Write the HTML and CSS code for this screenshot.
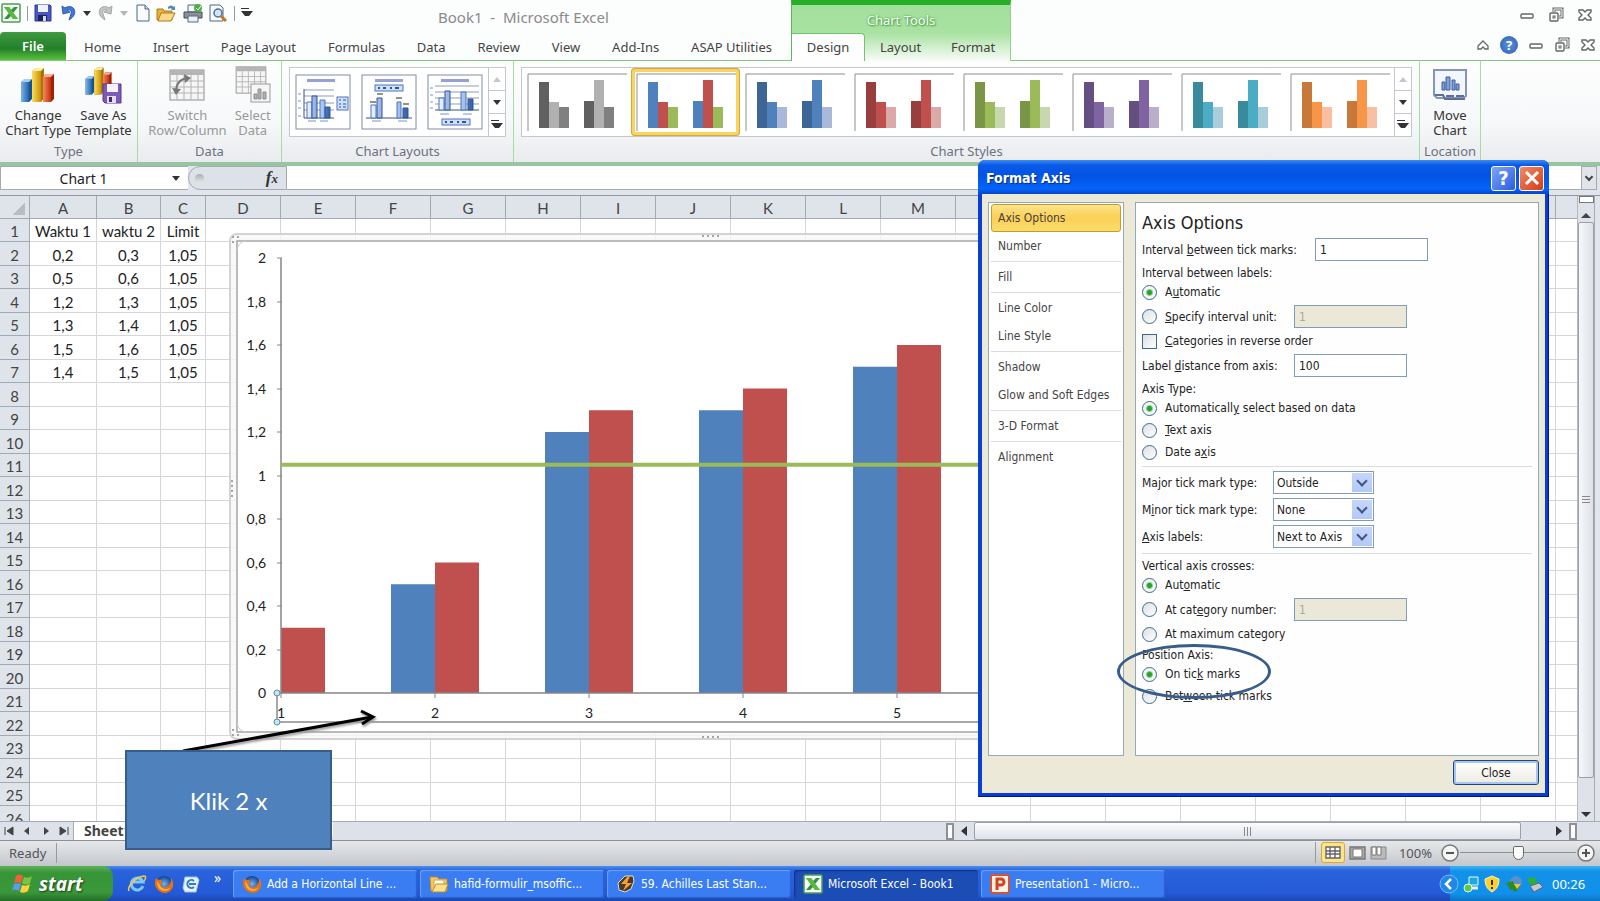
FILE: index.html
```html
<!DOCTYPE html>
<html lang="en">
<head>
    <meta charset="UTF-8">
    <meta name="viewport" content="width=device-width, initial-scale=1.0">
    <title>Book1 - Microsoft Excel</title>
    <link rel="stylesheet" href="styles.css">
</head>
<body>
    <!-- shared shapes -->
    <svg class="defs" width="0" height="0">
        <defs>
            <linearGradient id="gBlue"><stop offset="0" stop-color="#7db4e8"/><stop offset="1" stop-color="#1f63ad"/></linearGradient>
            <linearGradient id="gYellow"><stop offset="0" stop-color="#fbe05a"/><stop offset="1" stop-color="#c98d0a"/></linearGradient>
            <linearGradient id="gRed"><stop offset="0" stop-color="#f58a60"/><stop offset="1" stop-color="#c32f10"/></linearGradient>
            <linearGradient id="gBar"><stop offset="0" stop-color="#eaf2ff"/><stop offset="1" stop-color="#9fbdf0"/></linearGradient>
            <linearGradient id="gBarDark"><stop offset="0" stop-color="#a9c1ec"/><stop offset="1" stop-color="#365fa8"/></linearGradient>
            <radialGradient id="gFox"><stop offset="0" stop-color="#6fb4f5"/><stop offset="1" stop-color="#16418f"/></radialGradient>
        </defs>
        <symbol id="bars3d" viewBox="0 0 36 38">
            <path d="M1 16l4-3h7v20l-3 3H1z" fill="#17548f"/>
            <path d="M1 16h8v20H1z" fill="url(#gBlue)"/>
            <path d="M1 16l3-3h8l-3 3z" fill="#a6d0f2"/>
            <path d="M12 5l4-3h8v30l-3 4h-9z" fill="#a87408"/>
            <path d="M12 5h9v31h-9z" fill="url(#gYellow)"/>
            <path d="M12 5l4-3h8l-3 3z" fill="#fdf0a0"/>
            <path d="M23 11l3-3h8v25l-3 3h-8z" fill="#9e2108"/>
            <path d="M23 11h8v25h-8z" fill="url(#gRed)"/>
            <path d="M23 11l3-3h8l-3 3z" fill="#f9b08f"/>
        </symbol>
        <symbol id="swatch" viewBox="0 0 100 58">
            <path d="M1 58V1h99" fill="none" stroke="#8f8f8f"/>
            <path class="c1" d="M12 9h10v46H12zM57 28h10v27H57z"/>
            <path class="c2" d="M22 29h10v26H22zM67 7h10v48H67z"/>
            <path class="c3" d="M32 34h10v21H32zM77 34h10v21H77z"/>
        </symbol>
        <symbol id="firefox" viewBox="0 0 20 20">
            <circle cx="10" cy="10" r="8" fill="url(#gFox)"/>
            <path d="M2 4c-2 5-1 9 2 12 4 4 10 4 13 0 3-3 3-8 0-12 0 3 0 5-2 7-2 3-6 3-8 1-1-1 0-2 2-3-2-1-2-2-1-3C6 6 3 6 2 4z" fill="#e8701a"/>
            <path d="M3 7c0 5 2 9 7 10 3 0 5-1 6-3-4 2-9 1-10-3z" fill="#fbb034"/>
        </symbol>
        <symbol id="excel" viewBox="0 0 20 20">
            <rect x="1" y="1" width="18" height="18" rx="1" fill="#f4fbf2" stroke="#4f9a58" stroke-width="1.5"/>
            <path d="M3 4h5l2 3 3-3h4l-5 6 5 6h-5l-2-3-3 3H3l5-6z" fill="#2f9440"/>
            <path d="M8 4h-5l9 12h5z" fill="#5cb83f"/>
        </symbol>
        <symbol id="restore" viewBox="0 0 16 16">
            <path d="M6 5V2h8v8h-3" fill="none" stroke="#666" stroke-width="3"/>
            <path d="M6 5V2h8v8h-3" fill="none" stroke="#fff"/>
            <rect x="2" y="6" width="8" height="8" rx="1" fill="#fff" stroke="#666" stroke-width="1.4"/>
            <rect x="5" y="9" width="2" height="2" fill="#fff" stroke="#666"/>
        </symbol>
        <symbol id="minimize" viewBox="0 0 16 16">
            <rect x="2" y="7" width="12" height="4" rx="1" fill="#fff" stroke="#666" stroke-width="1.4"/>
        </symbol>
        <symbol id="cross" viewBox="0 0 16 16">
            <path d="M2 3h4l2 2 2-2h4v2l-3 3 3 3v2h-4l-2-2-2 2H2v-2l3-3-3-3z" fill="#fff" stroke="#666" stroke-width="1.4"/>
        </symbol>
        <symbol id="sheetIcon" viewBox="0 0 36 32">
            <rect x="1" y="1" width="34" height="30" fill="#f6f6f6" stroke="#8f8f8f"/>
            <path d="M1 1h34v5H1z" fill="#b5b5b5"/>
            <path d="M1 12h34M1 18h34M1 24h34M8 6v25M15 6v25M22 6v25M29 6v25" stroke="#b3b3b3"/>
        </symbol>
    </svg>

    <header class="titlebar">
        <div class="quick-access">
            <button aria-label="Excel"><svg width="20" height="20"><use href="#excel"/></svg></button>
            <span class="divider"></span>
            <button aria-label="Save"><svg width="18" height="18" viewBox="0 0 18 18"><path d="M1 1h15l1 1v15H1z" fill="#4a55c4" stroke="#2f3a96"/><path d="M4 1h10v7H4z" fill="#eef2fd"/><path d="M4 11h9v6H4z" fill="#1e2458"/><path d="M9 12h3v5H9z" fill="#d4dbf4"/></svg></button>
            <button class="undo" aria-label="Undo"><svg width="17" height="18" viewBox="0 0 17 18"><path d="M2 2l1 8 7-2-3-2c3-1 5 1 4 4l-2 6c5-3 7-7 5-11C12 2 8 2 5 4z" fill="#4179d6" stroke="#2b5cb4"/></svg></button>
            <span class="caret"></span>
            <button aria-label="Redo"><svg width="17" height="18" viewBox="0 0 17 18"><path d="M15 2l-1 8-7-2 3-2c-3-1-5 1-4 4l2 6C3 13 1 9 3 5c2-3 6-3 9-1z" fill="#c4c4c4" stroke="#a5a5a5"/></svg></button>
            <span class="caret caret-off"></span>
            <button class="new-file" aria-label="New"><svg width="14" height="18" viewBox="0 0 14 18"><path d="M1 1h8l4 4v12H1z" fill="#f9fcff" stroke="#4f668a"/><path d="M9 1v4h4" fill="#c9d8ee" stroke="#4f668a"/></svg></button>
            <button aria-label="Open"><svg width="21" height="18" viewBox="0 0 21 18"><path d="M1 5h6l1 2h8v9H1z" fill="#e8b13c" stroke="#b07b1c"/><path d="M5 9h14l-4 8H2z" fill="#fcd98a" stroke="#b07b1c"/><path d="M12 3c2-2 4-2 6 0l1-1v4h-4l1-1c-1-1-2-1-4 0z" fill="#4e86c6"/></svg></button>
            <button aria-label="Quick Print"><svg width="20" height="19" viewBox="0 0 20 19"><path d="M5 1h9v7H5z" fill="#f4f8ff" stroke="#5d6678"/><path d="M1 8h18v6H1z" fill="#8b919b" stroke="#454b55"/><path d="M5 12h10v6H5z" fill="#e9f1fc" stroke="#5d6678"/><circle cx="15" cy="4" r="4" fill="#4fae42"/><path d="M13 4l2 2 3-4" fill="none" stroke="#fff"/></svg></button>
            <button aria-label="Print Preview"><svg width="19" height="19" viewBox="0 0 19 19"><path d="M1 1h10l3 3v13H1z" fill="#f9fcff" stroke="#4f668a"/><circle cx="9" cy="9" r="4" fill="#cfe4f6" stroke="#51718f" stroke-width="1.5"/><path d="M12 12l5 5" stroke="#c07a2a" stroke-width="3"/></svg></button>
            <span class="divider"></span>
            <span class="caret caret-bar"></span>
        </div>
        <h1>Book1&nbsp; -&nbsp; Microsoft Excel</h1>
        <div class="window-buttons">
            <button aria-label="Minimize"><svg width="16" height="16"><use href="#minimize"/></svg></button>
            <button aria-label="Restore"><svg width="16" height="16"><use href="#restore"/></svg></button>
            <button aria-label="Close window"><svg width="16" height="16"><use href="#cross"/></svg></button>
        </div>
    </header>

    <nav class="tabs">
        <button class="tab tab-file">File</button>
        <div class="main-tabs">
            <button class="tab">Home</button>
            <button class="tab">Insert</button>
            <button class="tab">Page Layout</button>
            <button class="tab">Formulas</button>
            <button class="tab">Data</button>
            <button class="tab">Review</button>
            <button class="tab">View</button>
            <button class="tab">Add-Ins</button>
            <button class="tab">ASAP Utilities</button>
        </div>
        <div class="context-tabs">
            <span class="context-title">Chart Tools</span>
            <button class="tab tab-active">Design</button>
            <button class="tab">Layout</button>
            <button class="tab">Format</button>
        </div>
        <div class="window-buttons book-buttons">
            <button aria-label="Collapse ribbon"><svg width="14" height="16" viewBox="0 0 14 16"><path d="M2 9l5-5 5 5v3H9L7 10l-2 2H2z" fill="#fff" stroke="#666" stroke-width="1.3"/></svg></button>
            <button class="help" aria-label="Help">?</button>
            <button aria-label="Minimize book"><svg width="16" height="16"><use href="#minimize"/></svg></button>
            <button aria-label="Restore book"><svg width="16" height="16"><use href="#restore"/></svg></button>
            <button aria-label="Close book"><svg width="16" height="16"><use href="#cross"/></svg></button>
        </div>
    </nav>

    <section class="ribbon">
        <div class="group group-type">
            <div class="group-body">
                <button class="big"><svg width="36" height="38"><use href="#bars3d"/></svg>Change<br>Chart Type</button>
                <button class="big"><svg width="38" height="38" viewBox="0 0 38 38"><use href="#bars3d" width="30" height="30"/><path d="M19 18h18v19H21l-2-2z" fill="#7a5cb8" stroke="#543a92"/><path d="M23 18h11v8H23z" fill="#f5f2fc"/><path d="M23 30h9v7h-9z" fill="#e4def4"/><path d="M25 31h3v5h-3z" fill="#3f2c70"/></svg>Save As<br>Template</button>
            </div>
            <h2>Type</h2>
        </div>
        <div class="group group-data">
            <div class="group-body">
                <button class="big" disabled><svg width="36" height="38" viewBox="0 0 36 38"><use href="#sheetIcon" y="3" width="36" height="32"/><path d="M7 26c0-8 4-13 12-14" fill="none" stroke="#777" stroke-width="2"/><path d="M15 8l7 4-6 5zM3 22l4 7 5-6z" fill="#777"/></svg>Switch<br>Row/Column</button>
                <button class="big" disabled><svg width="36" height="38" viewBox="0 0 36 38"><use href="#sheetIcon" width="32" height="28"/><rect x="16" y="18" width="19" height="18" fill="#f6f6f6" stroke="#9a9a9a"/><path d="M19 33v-5h3v5zM23 33V23h3v10zM28 33v-7h3v7z" fill="#b0b0b0" stroke="#8f8f8f"/></svg>Select<br>Data</button>
            </div>
            <h2>Data</h2>
        </div>
        <div class="group group-layouts">
            <div class="group-body">
                <div class="gallery">
                    <button aria-label="Layout 1"><svg width="56" height="56" viewBox="0 0 56 56"><rect x="1" y="1" width="54" height="54" fill="#fff" stroke="#7f8ea8"/><path d="M12 5h28v3H12z" fill="#94a0d8"/><path d="M9 16h30M9 22h30M9 29h30M9 36h30" stroke="#8d9bb8"/><path d="M9 15v29h30" fill="none" stroke="#38527f"/><path d="M3 20h3M3 27h3M3 34h3M3 42h3M13 47h8M25 47h8" stroke="#7a94c8"/><path d="M12 28h5v16h-5zM25 26h5v18h-5z" fill="url(#gBar)" stroke="#4c74b8"/><path d="M17 22h5v22h-5zM30 33h5v11h-5z" fill="url(#gBarDark)" stroke="#2f5597"/><rect x="42" y="23" width="11" height="13" fill="#cfe0fb" stroke="#4c74b8"/><path d="M44 26h2M44 30h2M44 33h2M48 26h3M48 30h3M48 33h3" stroke="#2f5597"/></svg></button>
                    <button aria-label="Layout 2"><svg width="56" height="56" viewBox="0 0 56 56"><rect x="1" y="1" width="54" height="54" fill="#fff" stroke="#7f8ea8"/><path d="M14 5h28v3H14z" fill="#94a0d8"/><rect x="14" y="11" width="28" height="6" fill="#cfe0fb" stroke="#4c74b8"/><path d="M17 14h2M22 14h3M29 14h2M34 14h4" stroke="#2f5597" stroke-width="2"/><path d="M5 44h46" stroke="#38527f"/><path d="M10 31h5v13h-5zM36 28h4v16h-4z" fill="url(#gBar)" stroke="#4c74b8"/><path d="M16 24h5v20h-5zM42 34h5v10h-5z" fill="url(#gBarDark)" stroke="#2f5597"/><path d="M9 28h6M16 20h6M35 24h6M42 30h6" stroke="#222"/><path d="M11 47h9M37 47h9" stroke="#7a94c8"/></svg></button>
                    <button aria-label="Layout 3"><svg width="56" height="56" viewBox="0 0 56 56"><rect x="1" y="1" width="54" height="54" fill="#fff" stroke="#7f8ea8"/><path d="M14 5h28v3H14z" fill="#94a0d8"/><path d="M8 12h44M8 18h44M8 24h44M8 30h44" stroke="#8d9bb8"/><path d="M8 36h44" stroke="#38527f"/><path d="M3 14h3M3 21h3M3 28h3M3 34h3M13 40h9M36 40h9" stroke="#7a94c8"/><path d="M12 24h5v12h-5zM34 18h5v18h-5z" fill="url(#gBar)" stroke="#4c74b8"/><path d="M18 17h5v19h-5zM41 25h5v11h-5z" fill="url(#gBarDark)" stroke="#2f5597"/><rect x="15" y="45" width="28" height="6" fill="#cfe0fb" stroke="#4c74b8"/><path d="M18 48h2M23 48h3M30 48h2M35 48h4" stroke="#2f5597" stroke-width="2"/></svg></button>
                    <div class="gallery-scroll">
                        <button disabled aria-label="Previous layouts"><span class="up"></span></button>
                        <button aria-label="Next layouts"><span class="caret"></span></button>
                        <button aria-label="More layouts"><span class="caret caret-bar"></span></button>
                    </div>
                </div>
            </div>
            <h2>Chart Layouts</h2>
        </div>
        <div class="group group-styles">
            <div class="group-body">
                <div class="gallery gallery-styles">
                    <button class="style gray" aria-label="Style 1"><svg><use href="#swatch"/></svg></button>
                    <button class="style mixed selected" aria-label="Style 2"><svg><use href="#swatch"/></svg></button>
                    <button class="style blue" aria-label="Style 3"><svg><use href="#swatch"/></svg></button>
                    <button class="style red" aria-label="Style 4"><svg><use href="#swatch"/></svg></button>
                    <button class="style green" aria-label="Style 5"><svg><use href="#swatch"/></svg></button>
                    <button class="style purple" aria-label="Style 6"><svg><use href="#swatch"/></svg></button>
                    <button class="style teal" aria-label="Style 7"><svg><use href="#swatch"/></svg></button>
                    <button class="style orange" aria-label="Style 8"><svg><use href="#swatch"/></svg></button>
                    <div class="gallery-scroll">
                        <button disabled aria-label="Previous styles"><span class="up"></span></button>
                        <button aria-label="Next styles"><span class="caret"></span></button>
                        <button aria-label="More styles"><span class="caret caret-bar"></span></button>
                    </div>
                </div>
            </div>
            <h2>Chart Styles</h2>
        </div>
        <div class="group group-location">
            <div class="group-body">
                <button class="big"><svg width="36" height="38" viewBox="0 0 36 38"><path d="M2 4h32v26l-3 2H5l-3-3z" fill="#f3f7fd" stroke="#8496b8" stroke-width="2"/><path d="M3 29h8l2 4h20" fill="none" stroke="#5c6f94" stroke-width="2"/><path d="M14 30h8M24 30h8" stroke="#5c6f94" stroke-width="2"/><path d="M10 16h3v8h-3zM14 11h4v13h-4zM20 14h3v10h-3zM24 18h3v6h-3z" fill="#7d9fd8" stroke="#3f5f9c"/></svg>Move<br>Chart</button>
            </div>
            <h2>Location</h2>
        </div>
    </section>

    <section class="formula-bar">
        <div class="name-box"><input type="text" value="Chart 1" aria-label="Name Box"><span class="caret"></span></div>
        <div class="fx-box"><span class="knob"></span><button aria-label="Insert Function"><i>f</i><i class="sub">x</i></button></div>
        <input class="formula" type="text" aria-label="Formula">
        <button class="expand" aria-label="Expand formula bar"><span class="chevron"></span></button>
    </section>

    <main class="workbook">
        <div class="sheet">
            <table class="grid">
                <colgroup id="cols"><col class="col-head"><col class="col-a"><col class="col-b"><col class="col-c"></colgroup>
                <thead><tr id="letters"><th class="corner"></th></tr></thead>
                <tbody id="cells"></tbody>
            </table>

            <div class="chart">
                <svg id="chart" width="800" height="508" viewBox="229 232 800 508" font-size="14" fill="#222">
                    <rect x="230" y="234" width="820" height="505" rx="7" fill="#f7f7f7" fill-opacity=".8" stroke="#d3d3d3" stroke-width="2"/>
                    <rect x="237" y="241" width="820" height="491" fill="#fff" stroke="#a5a5a5" stroke-width="1.5"/>
                    <path d="M237 250q1-8 9-9M237 723q1 8 9 9" fill="none" stroke="#c9c9c9"/>
                    <path d="M232 237h2M237 237h2M232 242h2M232 730h2M232 735h2M237 735h2M702 236h2M707 236h2M712 236h2M717 236h2M702 737h2M707 737h2M712 737h2M717 737h2M231 481h2M231 486h2M231 491h2M231 496h2" stroke="#a5a5a5" stroke-width="2"/>
                </svg>
            </div>
        </div>
        <div class="vscroll">
            <span class="vsplit"></span>
            <button aria-label="Scroll up"><span class="up"></span></button>
            <div class="vthumb"><span class="grip"></span></div>
            <button aria-label="Scroll down"><span class="caret"></span></button>
        </div>
    </main>

    <div class="sheet-bar">
        <div class="sheet-nav">
            <button aria-label="First sheet"><svg width="10" height="10"><path d="M1 1v8M9 1v8L3 5z" fill="#444" stroke="#444"/></svg></button>
            <button aria-label="Previous sheet"><svg width="10" height="10"><path d="M7 1v8L2 5z" fill="#444"/></svg></button>
            <button aria-label="Next sheet"><svg width="10" height="10"><path d="M3 1v8l5-4z" fill="#444"/></svg></button>
            <button aria-label="Last sheet"><svg width="10" height="10"><path d="M9 1v8M1 1v8l6-4z" fill="#444" stroke="#444"/></svg></button>
        </div>
        <button class="sheet-tab">Sheet1</button>
        <div class="hscroll">
            <span class="hsplit"></span>
            <button aria-label="Scroll left"><svg width="10" height="12"><path d="M8 1v10L2 6z" fill="#333"/></svg></button>
            <div class="hthumb"><span class="grip grip-h"></span></div>
            <button aria-label="Scroll right"><svg width="10" height="12"><path d="M2 1v10l6-5z" fill="#333"/></svg></button>
            <span class="hsplit"></span>
        </div>
    </div>

    <footer class="status">
        <span class="ready">Ready</span>
        <div class="views">
            <button class="view-on" aria-label="Normal"><svg width="16" height="13"><path d="M1 1h14v11H1zM1 5h14M1 8h14M5 1v11M10 1v11" fill="#fff" stroke="#666" stroke-width="1.4"/></svg></button>
            <button aria-label="Page Layout view"><svg width="17" height="14"><path d="M1 1h15v12H1z" fill="#aaa" stroke="#777" stroke-width="1.4"/><path d="M4 3h9v8H4z" fill="#fff" stroke="#777"/></svg></button>
            <button aria-label="Page Break Preview"><svg width="17" height="14"><path d="M1 1h15v12H1z" fill="#bbb" stroke="#888"/><path d="M2 1h4v8H2zM7 1h4v8H7z" fill="#fff" stroke="#777"/></svg></button>
        </div>
        <label class="zoom-value" for="zoom">100%</label>
        <div class="zoom">
            <button aria-label="Zoom out"><svg width="20" height="20"><circle cx="10" cy="10" r="8" fill="#f5f5f5" stroke="#777" stroke-width="1.5"/><path d="M6 10h8" stroke="#555" stroke-width="2"/></svg></button>
            <input type="range" id="zoom" min="0" max="100" value="50">
            <button aria-label="Zoom in"><svg width="20" height="20"><circle cx="10" cy="10" r="8" fill="#f5f5f5" stroke="#777" stroke-width="1.5"/><path d="M6 10h8M10 6v8" stroke="#555" stroke-width="2"/></svg></button>
        </div>
    </footer>

    <footer class="taskbar">
        <button class="start">
            <svg width="22" height="20" viewBox="0 0 22 20"><path d="M4 2c3-2 5-1 7 0L9 9C7 8 5 8 2 9z" fill="#f2603a"/><path d="M12 3c3 1 5 1 8-1l-2 7c-2 2-5 2-8 0z" fill="#7cc33f"/><path d="M2 10c3-1 5-1 7 0l-2 7c-2-1-5-2-7 0z" fill="#5b9bf0"/><path d="M10 11c3 1 5 1 8-1l-2 7c-3 2-5 2-8 1z" fill="#fcd23c"/></svg>
            start
        </button>
        <div class="quick-launch">
            <button aria-label="Internet Explorer"><svg width="20" height="20" viewBox="0 0 20 20"><path d="M16 12a6 6 0 1 1 0-4H6" fill="none" stroke="#7cc8fa" stroke-width="3"/><path d="M2 17C0 13 8 3 17 2c3 0 1 4 0 5" fill="none" stroke="#f3c84a" stroke-width="1.5"/></svg></button>
            <button aria-label="Firefox"><svg width="20" height="20"><use href="#firefox"/></svg></button>
            <button aria-label="Show Desktop"><svg width="20" height="20" viewBox="0 0 20 20"><path d="M4 3h12l2 3-3 12H4L2 14z" fill="#e8f3ff" stroke="#9cc4ee"/><path d="M13 7a4 4 0 1 0 0 6M8 10h7" fill="none" stroke="#2f7fd0" stroke-width="2"/></svg></button>
            <span class="more">»</span>
        </div>
        <div class="tasks">
            <button class="task"><svg width="20" height="20"><use href="#firefox"/></svg><span>Add a Horizontal Line ...</span></button>
            <button class="task"><svg width="20" height="20" viewBox="0 0 20 20"><path d="M1 3h7l2 2h8v12H2z" fill="#f6c95c" stroke="#c08c28"/><path d="M5 6h10v8H5z" fill="#fffbe8" stroke="#c9a65a"/><path d="M7 10h12l-3 8H3z" fill="#fbe08e" stroke="#c08c28"/></svg><span>hafid-formulir_msoffic...</span></button>
            <button class="task"><svg width="20" height="20" viewBox="0 0 20 20"><path d="M2 9l7-7 8 0 1 5-3 8-6 3-6-2z" fill="#4a3a2a" stroke="#ddd"/><path d="M12 2L5 10h5l-3 7 9-8h-5l3-7z" fill="#f8a130"/></svg><span>59. Achilles Last Stan...</span></button>
            <button class="task task-active"><svg width="20" height="20"><use href="#excel"/></svg><span>Microsoft Excel - Book1</span></button>
            <button class="task"><svg width="20" height="20" viewBox="0 0 20 20"><rect x="1" y="1" width="18" height="18" rx="2" fill="#fff1ea" stroke="#d9532c" stroke-width="2"/><path d="M7 16V5h4a3 3 0 0 1 0 6H7" fill="none" stroke="#cf4520" stroke-width="3"/></svg><span>Presentation1 - Micro...</span></button>
        </div>
        <div class="tray">
            <button class="tray-arrow" aria-label="Hide icons"><svg width="20" height="20" viewBox="0 0 20 20"><circle cx="10" cy="10" r="9" fill="#2387ea" stroke="#6cc0fb"/><path d="M12 5l-5 5 5 5" fill="none" stroke="#fff" stroke-width="2.5"/></svg></button>
            <svg width="17" height="18" viewBox="0 0 17 18"><path d="M6 2h9v8H6z" fill="#1fa8d8" stroke="#dff"/><path d="M5 13h10" stroke="#eee" stroke-width="3"/><circle cx="5" cy="13" r="4" fill="#5dc94a" stroke="#e8ffe0"/></svg>
            <svg width="17" height="18" viewBox="0 0 17 18"><path d="M8 1l7 3c0 6-2 10-7 13C3 14 1 10 1 4z" fill="#fbd02e" stroke="#fff2b0"/><path d="M8 5v5M8 12v2" stroke="#3a2b00" stroke-width="2"/></svg>
            <svg width="18" height="18" viewBox="0 0 18 18"><circle cx="11" cy="7" r="6" fill="#5c8fd0"/><path d="M1 8l7-2 2 5 6-2-5 8-6-3z" fill="#2c8a26"/><path d="M9 9l3 5 4-5z" fill="#f0c52e"/></svg>
            <svg width="17" height="18" viewBox="0 0 17 18"><path d="M3 11l9-3 4 4-9 5z" fill="#c4c8ce" stroke="#666"/><path d="M1 2l4 1 4-1-1 3 3 2-6 3-4-4z" fill="#2fb02c"/></svg>
            <time>00:26</time>
        </div>
    </footer>

    <section class="dialog" role="dialog" aria-labelledby="dialogTitle">
        <div class="dialog-title">
            <h2 id="dialogTitle">Format Axis</h2>
            <button class="dialog-help" aria-label="Dialog help">?</button>
            <button class="dialog-x" aria-label="Close dialog"><svg width="18" height="18"><path d="M3 3l12 12M15 3L3 15" stroke="#fff" stroke-width="3"/></svg></button>
        </div>
        <div class="dialog-body">
            <div class="pages">
                <button class="page page-on">Axis Options</button>
                <button class="page">Number</button>
                <hr>
                <button class="page">Fill</button>
                <hr>
                <button class="page">Line Color</button>
                <button class="page">Line Style</button>
                <hr>
                <button class="page">Shadow</button>
                <button class="page">Glow and Soft Edges</button>
                <hr>
                <button class="page">3-D Format</button>
                <hr>
                <button class="page">Alignment</button>
            </div>
            <form class="options">
                <h3>Axis Options</h3>
                <div class="field"><label class="wide" for="tick">Interval <u>b</u>etween tick marks:</label><input type="text" id="tick" value="1"></div>
                <p class="caption">Interval between labels:</p>
                <label class="option"><input type="radio" name="interval" checked><span>A<u>u</u>tomatic</span></label>
                <div class="field"><label class="option mid"><input type="radio" name="interval"><span><u>S</u>pecify interval unit:</span></label><input type="text" value="1" aria-label="Interval unit" disabled></div>
                <label class="option"><input type="checkbox"><span><u>C</u>ategories in reverse order</span></label>
                <div class="field"><label class="mid" for="dist">Label <u>d</u>istance from axis:</label><input type="text" id="dist" value="100"></div>
                <p class="caption">Axis Type:</p>
                <label class="option"><input type="radio" name="type" checked><span>Automaticall<u>y</u> select based on data</span></label>
                <label class="option"><input type="radio" name="type"><span><u>T</u>ext axis</span></label>
                <label class="option"><input type="radio" name="type"><span>Date a<u>x</u>is</span></label>
                <hr>
                <div class="field"><label class="short" for="major">Ma<u>j</u>or tick mark type:</label><div class="select"><select id="major"><option>Outside</option></select></div></div>
                <div class="field"><label class="short" for="minor">M<u>i</u>nor tick mark type:</label><div class="select"><select id="minor"><option>None</option></select></div></div>
                <div class="field"><label class="short" for="labels"><u>A</u>xis labels:</label><div class="select"><select id="labels"><option>Next to Axis</option></select></div></div>
                <hr>
                <p class="caption">Vertical axis crosses:</p>
                <label class="option"><input type="radio" name="cross" checked><span>Aut<u>o</u>matic</span></label>
                <div class="field"><label class="option mid"><input type="radio" name="cross"><span>At cat<u>e</u>gory number:</span></label><input type="text" value="1" aria-label="Category number" disabled></div>
                <label class="option"><input type="radio" name="cross"><span>At maximum cate<u>g</u>ory</span></label>
                <p class="caption">Position Axis:</p>
                <label class="option"><input type="radio" name="position" checked><span>On tic<u>k</u> marks</span></label>
                <label class="option"><input type="radio" name="position"><span>Bet<u>w</u>een tick marks</span></label>
            </form>
        </div>
        <div class="dialog-foot"><button class="close">Close</button></div>
        <div class="ring"></div>
    </section>

    <svg class="arrow" width="200" height="46" viewBox="0 0 200 46">
        <path d="M1 42L190 8" stroke="#000" stroke-width="3"/>
        <path d="M179 2l12 6-11 7" fill="none" stroke="#000" stroke-width="3"/>
    </svg>
    <div class="callout">Klik 2 x</div>

    <script>
        // worksheet grid
        const data = [
            ["Waktu 1", "waktu 2", "Limit"],
            ["0,2", "0,3", "1,05"],
            ["0,5", "0,6", "1,05"],
            ["1,2", "1,3", "1,05"],
            ["1,3", "1,4", "1,05"],
            ["1,5", "1,6", "1,05"],
            ["1,4", "1,5", "1,05"]
        ];
        // the dialog covers the headings after M
        const letters = "ABCDEFGHIJKLM".split("").concat(Array(9).fill(""));
        document.getElementById("letters").innerHTML += letters.map(l => `<th scope="col">${l}</th>`).join("");
        document.getElementById("cols").innerHTML += "<col>".repeat(letters.length - 3);
        let rows = "";
        for (let r = 0; r < 26; r++) {
            rows += `<tr><th scope="row">${r + 1}</th>`;
            letters.forEach((l, c) => {
                rows += `<td>${data[r] && data[r][c] ? data[r][c] : ""}</td>`;
            });
            rows += "</tr>";
        }
        document.getElementById("cells").innerHTML = rows;

        // clustered columns with the limit line
        const x0 = 281, y0 = 693, stepX = 154, unit = 217.5, bar = 44;
        const y = v => y0 - v * unit;
        let out = "";
        for (let i = 0; i <= 10; i++) {
            const v = i / 5;
            out += `<path d="M277 ${Math.round(y(v))}h5" stroke="#868686"/>`;
            out += `<text x="266" y="${Math.round(y(v)) + 5}" text-anchor="end">${String(v).replace(".", ",")}</text>`;
        }
        data.slice(1, 6).forEach((row, i) => {
            const x = x0 + i * stepX;
            const [a, b] = row.map(t => parseFloat(t.replace(",", ".")));
            // the first blue column falls left of the axis and is cut off
            if (i > 0) out += `<rect x="${x - bar}" y="${y(a)}" width="${bar}" height="${a * unit}" fill="#4f81bd"/>`;
            out += `<rect x="${x}" y="${y(b)}" width="${bar}" height="${b * unit}" fill="#c0504d"/>`;
            out += `<path d="M${x} ${y0}v5" stroke="#868686"/>`;
            out += `<text x="${x}" y="718" text-anchor="middle">${i + 1}</text>`;
        });
        out += `<path d="M281 258V693H1029" fill="none" stroke="#868686" stroke-width="1.5"/>`;
        out += `<path d="M281 ${y(1.05)}H1029" stroke="#9bbb59" stroke-width="4"/>`;
        out += `<path d="M1029 722H277V693" fill="none" stroke="#8a8a8a" stroke-width="1.5"/>`;
        out += `<circle cx="277" cy="693" r="3" fill="#c9e4f2" stroke="#5c8ba8"/><circle cx="277" cy="722" r="3" fill="#c9e4f2" stroke="#5c8ba8"/>`;
        document.getElementById("chart").innerHTML += out;
    </script>
</body>
</html>
```
FILE: styles.css
```css
* {
    box-sizing: border-box;
}
body {
    margin: 0;
    height: 100vh;
    display: flex;
    flex-direction: column;
    overflow: hidden;
    position: relative;
    font-family: "Noto Sans", sans-serif;
    font-size: 13px;
    color: #333;
    background: #fcfdfd;
}
button, input, select {
    font: inherit;
    color: inherit;
}
button {
    border: 0;
    padding: 0;
    background: none;
}
h1, h2, h3, p, hr {
    margin: 0;
    font-weight: normal;
}
svg {
    display: block;
}
.defs {
    position: absolute;
}

/* small arrows */
.caret {
    display: inline-block;
    border: 4px solid transparent;
    border-top: 5px solid #333;
    border-bottom: 0;
}
.caret-off {
    border-top-color: #b5b5b5;
}
.caret-bar::before {
    content: "";
    display: block;
    width: 8px;
    height: 1px;
    margin: -8px 0 0 -4px;
    background: #333;
}
.up {
    display: inline-block;
    border: 4px solid transparent;
    border-bottom: 5px solid #444;
    border-top: 0;
}
.chevron {
    width: 6px;
    height: 6px;
    border: solid #444;
    border-width: 0 2px 2px 0;
    transform: rotate(45deg);
}

/* title bar */
.titlebar {
    display: flex;
    align-items: center;
    height: 30px;
    flex: none;
}
.quick-access {
    display: flex;
    align-items: center;
    gap: 6px;
    width: 438px;
    padding: 0 0 4px 1px;
}
.divider {
    width: 1px;
    height: 15px;
    background: #999;
}
.undo, .new-file {
    margin-left: 2px;
}
.titlebar h1 {
    font-size: 15px;
    line-height: 20px;
    color: #8a8a8a;
    padding-top: 4px;
}
.window-buttons {
    display: flex;
    align-items: center;
    gap: 13px;
    margin-left: auto;
    padding-right: 7px;
}

/* tabs */
.tabs {
    display: flex;
    height: 31px;
    flex: none;
    border-bottom: 1px solid #7fc97b;
}
.tab {
    height: 30px;
    padding: 3px 15px 0;
    line-height: 18px;
    color: #444;
    white-space: nowrap;
}
.tab-file {
    width: 66px;
    margin-top: 2px;
    height: 28px;
    padding-top: 0;
    border-radius: 4px 4px 0 0;
    color: #fff;
    font-weight: 600;
    background: linear-gradient(#3f9a3f, #23802a 60%, #5cbf3c);
}
.main-tabs {
    display: flex;
    width: 725px;
    padding: 0 4px 0 3px;
    justify-content: space-between;
}
.context-tabs {
    position: relative;
    display: flex;
    width: 220px;
    height: 61px;
    margin-top: -30px;
    padding-top: 28px;
    border-left: 1px solid #5cb85a;
    border-right: 1px solid #8fd48c;
    border-top: 5px solid #27ae27;
    background: linear-gradient(#a3df9c, #a9e2a2 50%, #f8fcf7);
}
.context-title {
    position: absolute;
    top: 6px;
    left: 0;
    width: 100%;
    text-align: center;
    line-height: 18px;
    color: #fff;
    text-shadow: 0 0 2px #3c9a3c, 1px 1px 2px #3c9a3c;
}
.context-tabs .tab {
    height: 28px;
    flex: auto;
    padding: 0 12px 1px;
}
.context-tabs .tab-active {
    border: 1px solid #6fc46c;
    border-bottom: 0;
    border-left: 0;
    border-radius: 0 4px 0 0;
    background: #fdfefd;
}
.book-buttons {
    gap: 10px;
    padding-right: 4px;
}
.help {
    width: 18px;
    height: 18px;
    border-radius: 50%;
    line-height: 18px;
    font-weight: bold;
    color: #fff;
    background: radial-gradient(#5b93dc, #2a5db0);
}

/* ribbon */
.ribbon {
    display: flex;
    height: 105px;
    flex: none;
    background: linear-gradient(#fefefe, #f6f8f9 60%, #e9ebee);
    border-bottom: 4px solid #97c5a1;
}
.group {
    display: flex;
    flex-direction: column;
    border-right: 1px solid #a9dba6;
}
.group-body {
    display: flex;
    justify-content: center;
    flex: 1;
    padding-top: 5px;
}
.group h2 {
    font-size: 13px;
    line-height: 20px;
    padding-bottom: 1px;
    text-align: center;
    color: #6b7280;
}
.group-type {
    width: 138px;
}
.group-data {
    width: 144px;
}
.group-layouts {
    width: 232px;
}
.group-styles {
    flex: 1;
    min-width: 0;
}
.group-location {
    width: 61px;
    margin-right: 119px;
}
.big {
    display: flex;
    flex-direction: column;
    align-items: center;
    padding: 0 2px;
    font-size: 13px;
    line-height: 15px;
    white-space: nowrap;
    color: #333;
}
.big svg {
    margin-bottom: 4px;
}
.big:disabled {
    color: #999;
}
.group-data .group-body {
    gap: 4px;
}
.gallery {
    display: flex;
    width: 217px;
    height: 70px;
    margin-top: 1px;
    border: 1px solid #c3c8ce;
    background: #fff;
}
.gallery > button {
    flex: 1 1 0;
    min-width: 0;
    display: flex;
    align-items: center;
    justify-content: center;
}
.gallery-styles {
    width: auto;
    flex: 1;
    margin: 1px 7px 0;
}
.gallery-scroll {
    display: flex;
    flex-direction: column;
    width: 17px;
    border-left: 1px solid #c3c8ce;
}
.gallery-scroll button {
    flex: 1;
    display: flex;
    align-items: center;
    justify-content: center;
}
.gallery-scroll button + button {
    border-top: 1px solid #c3c8ce;
}
.gallery-scroll button:disabled {
    opacity: .3;
}
.style svg {
    flex: none;
    width: 100px;
    height: 58px;
}
.style.selected {
    border-radius: 4px;
    box-shadow: inset 0 0 0 1px #d9a83c, inset 0 0 0 4px #f6d565;
}
.c1 { fill: var(--c1); }
.c2 { fill: var(--c2); }
.c3 { fill: var(--c3); }
.gray { --c1: #606060; --c2: #b1b1b1; --c3: #808080; }
.mixed { --c1: #4f81bd; --c2: #c0504d; --c3: #9bbb59; }
.blue { --c1: #3d6696; --c2: #4f81bd; --c3: #aab9d9; }
.red { --c1: #983f3d; --c2: #c0504d; --c3: #daa9a8; }
.green { --c1: #7b9546; --c2: #9bbb59; --c3: #c8d7b0; }
.purple { --c1: #654f80; --c2: #8064a2; --c3: #b9afca; }
.teal { --c1: #3a8a9e; --c2: #4bacc6; --c3: #a9cdda; }
.orange { --c1: #c87838; --c2: #f79646; --c3: #f8bfa2; }

/* formula bar */
.formula-bar {
    display: flex;
    height: 30px;
    flex: none;
    padding-bottom: 5px;
    background: #e1e4ea;
    border-bottom: 1px solid #9298a5;
}
.formula-bar input {
    border: 0;
    background: #fff;
    outline: 0;
}
.name-box {
    display: flex;
    align-items: center;
    width: 188px;
    padding-right: 8px;
    background: #fff;
    border: 1px solid #a5abb5;
    border-right: 0;
}
.name-box input {
    width: 163px;
    flex: 1;
    padding: 0 6px 0 0;
    text-align: center;
    font-size: 14px;
    color: #222;
}
.fx-box {
    display: flex;
    align-items: center;
    justify-content: space-between;
    width: 99px;
    padding: 0 8px 0 6px;
    border: 1px solid #a5abb5;
    border-radius: 12px 0 0 12px;
    background: #dde1e8;
}
.knob {
    width: 9px;
    height: 9px;
    border-radius: 50%;
    background: linear-gradient(#a9adb4, #e8e8e8);
}
.fx-box button {
    font: bold 17px/20px "Liberation Serif", serif;
}
.fx-box .sub {
    font-size: 13px;
}
.formula-bar .formula {
    flex: 1;
    border-bottom: 1px solid #a5abb5;
}
.expand {
    display: flex;
    justify-content: center;
    padding-top: 7px;
    width: 16px;
    margin-right: 3px;
    border: 1px solid #a5abb5;
}

/* worksheet */
.workbook {
    display: flex;
    flex: 1;
    min-height: 0;
    padding-right: 5px;
    background: #e1e4ea;
}
.sheet {
    position: relative;
    flex: 1;
    min-width: 0;
    overflow: hidden;
    background: #fff;
}
.grid {
    width: 1631px;
    table-layout: fixed;
    border-collapse: separate;
    border-spacing: 0;
    font-family: Lato, sans-serif;
    font-size: 15px;
    line-height: 20px;
    color: #222;
}
.col-head { width: 30px; }
.col-a { width: 67px; }
.col-b { width: 64px; }
.col-c { width: 45px; }
.grid th, .grid td {
    height: 23px;
    padding: 2px 0 0;
    text-align: center;
    white-space: nowrap;
    border: solid #d5d7da;
    border-width: 0 1px 1px 0;
}
.grid tbody tr:nth-child(even) > * {
    height: 24px;
}
.grid th {
    font-weight: normal;
    color: #444;
    background: #dfe3ea;
    border-color: #a3a9b3;
}
.grid .corner {
    background: linear-gradient(135deg, transparent 50%, #b8bcc4 50%) right 4px bottom 3px / 13px 13px no-repeat #dfe3ea;
}
.chart {
    position: absolute;
    left: 229px;
    top: 36px;
    font-family: Lato, sans-serif;
}
.vscroll {
    display: flex;
    flex-direction: column;
    align-items: center;
    width: 18px;
    border-left: 1px solid #b5bac3;
    border-right: 1px solid #a5abb5;
    background: #dfe2e8;
}
.vscroll button {
    height: 19px;
}
.vsplit {
    width: 15px;
    height: 7px;
    border: 1px solid #777;
    background: #fff;
}
.vscroll .up, .vscroll .caret {
    border-width: 5px;
}
.vscroll .up {
    border-top: 0;
}
.vscroll .caret {
    border-bottom: 0;
}
.vthumb {
    display: flex;
    align-items: center;
    justify-content: center;
    flex: 1;
    width: 16px;
    margin-bottom: 24px;
    border: 1px solid #9a9fa9;
    border-radius: 2px;
    background: linear-gradient(90deg, #f8f9fb, #dde0e6);
}
.grip {
    width: 8px;
    height: 9px;
    background: repeating-linear-gradient(#888 0 1px, transparent 1px 3px);
}
.grip-h {
    background: repeating-linear-gradient(90deg, #888 0 1px, transparent 1px 3px);
}

/* sheet tabs */
.sheet-bar {
    display: flex;
    height: 20px;
    flex: none;
    padding-right: 23px;
    border-top: 1px solid #a5abb5;
    border-bottom: 1px solid #8b9099;
    background: #dde1e9;
}
.sheet-nav {
    display: flex;
    justify-content: space-around;
    width: 73px;
}
.sheet-tab {
    width: 260px;
    padding-left: 10px;
    line-height: 18px;
    text-align: left;
    font-weight: bold;
    font-size: 14px;
    color: #444;
    background: #fff;
    border-left: 1px solid #a5abb5;
    border-radius: 0 0 6px 0;
}
.hscroll {
    display: flex;
    align-items: center;
    width: 631px;
    margin-left: auto;
}
.hscroll button {
    width: 20px;
    display: flex;
    justify-content: center;
}
.hsplit {
    width: 8px;
    height: 17px;
    border: 2px solid #8b9099;
    background: #fff;
}
.hthumb {
    display: flex;
    align-items: center;
    justify-content: center;
    flex: 1;
    height: 18px;
    margin-right: 28px;
    border: 1px solid #9a9fa9;
    border-radius: 2px;
    background: linear-gradient(#fafbfc, #dfe2e8);
}

/* status bar */
.status {
    display: flex;
    align-items: center;
    height: 25px;
    flex: none;
    padding: 0 4px 2px 9px;
    background: linear-gradient(#e6e8ea, #c3c7cc);
    color: #555;
}
.ready {
    width: 48px;
    border-right: 1px solid #999;
    line-height: 20px;
}
.views {
    display: flex;
    align-items: center;
    gap: 4px;
    margin-left: auto;
    padding-left: 5px;
    border-left: 1px solid #999;
}
.view-on {
    padding: 3px;
    border: 1px solid #d9a83c;
    border-radius: 3px;
    background: #fbe48a;
}
.zoom-value {
    margin: 0 8px 0 12px;
}
.zoom {
    display: flex;
    align-items: center;
    width: 156px;
}
.zoom input {
    flex: 1;
    min-width: 0;
    margin: 0;
    height: 20px;
    appearance: none;
    background: linear-gradient(#8a8f96, #8a8f96) center / 100% 1px no-repeat;
}
.zoom input::-webkit-slider-thumb {
    appearance: none;
    width: 11px;
    height: 14px;
    border: 1px solid #666;
    border-radius: 2px 2px 6px 6px;
    background: #fafafa;
}

/* taskbar */
.taskbar {
    display: flex;
    height: 35px;
    flex: none;
    color: #fff;
    background: linear-gradient(#4a90f0, #2a63dc 12%, #2459d6 80%, #1c46ac);
}
.start {
    display: flex;
    align-items: center;
    gap: 5px;
    width: 113px;
    padding-left: 12px;
    border-radius: 0 10px 10px 0;
    font-size: 19px;
    font-weight: bold;
    font-style: italic;
    text-shadow: 1px 1px 2px #143c10;
    background: linear-gradient(#5fb25c, #379437 20%, #3a973a 75%, #256e25);
}
.quick-launch {
    display: flex;
    align-items: center;
    gap: 7px;
    width: 120px;
    padding-left: 14px;
}
.more {
    padding: 0 0 12px 6px;
    font-size: 14px;
    line-height: 16px;
}
.tasks {
    display: flex;
    flex: 1;
    gap: 3px;
    padding: 4px 0 3px;
}
.task {
    display: flex;
    align-items: center;
    gap: 5px;
    width: 184px;
    min-width: 0;
    padding: 0 9px;
    border-radius: 3px;
    font-family: "DejaVu Sans Condensed", "Noto Sans", sans-serif;
    font-size: 12px;
    white-space: nowrap;
    box-shadow: inset 1px 1px 1px #6ba4fa, inset -1px -1px 1px #2a5fd0;
    background: #3a7df2;
}
.task-active {
    background: #1c4db4;
    box-shadow: inset 1px 1px 2px #0f2f80;
}
.tray {
    display: flex;
    align-items: center;
    gap: 4px;
    width: 150px;
    background: linear-gradient(#3cb4f5, #1291e8 15%, #1190ea 80%, #0e70c0);
}
.tray-arrow {
    margin-left: -11px;
}
.tray time {
    margin-left: 4px;
    font-size: 13px;
}

/* Format Axis dialog */
.dialog {
    position: absolute;
    left: 978px;
    top: 160px;
    width: 571px;
    padding: 0 4px 4px;
    border-radius: 7px 7px 0 0;
    background: #0a3fd4;
    box-shadow: inset -1px -1px 1px #00138c;
    font-family: "DejaVu Sans Condensed", "Noto Sans", sans-serif;
    font-size: 12px;
    color: #222;
}
.dialog-title {
    display: flex;
    align-items: center;
    gap: 3px;
    height: 34px;
    margin: 0 -4px;
    padding: 2px 5px 0 8px;
    border-radius: 7px 7px 0 0;
    color: #fff;
    background: linear-gradient(#3d8cf2, #0a5ae8 15%, #0453e4 45%, #0464fb 85%, #0346c8);
}
.dialog-title h2 {
    flex: 1;
    font-size: 14px;
    font-weight: bold;
    text-shadow: 1px 1px 1px #0a2a7c;
}
.dialog-title button {
    display: flex;
    align-items: center;
    justify-content: center;
    width: 25px;
    height: 25px;
    border: 1px solid #fff;
    border-radius: 3px;
}
.dialog-help {
    font-size: 20px;
    font-weight: bold;
    background: linear-gradient(135deg, #7fa5f5, #2a5de0);
}
.dialog-x {
    background: linear-gradient(135deg, #f08a68, #d43e14);
}
.dialog-body {
    display: flex;
    gap: 11px;
    padding: 8px 6px 0;
    background: #ece9d8;
}
.pages {
    width: 136px;
    padding: 1px 2px;
    border: 1px solid #8fa9bf;
    background: #fff;
}
.page {
    display: block;
    width: 100%;
    height: 28px;
    padding: 0 7px;
    text-align: left;
    white-space: nowrap;
    color: #444;
}
.page-on {
    border: 1px solid #c29b29;
    border-radius: 3px;
    padding: 0 6px;
    background: linear-gradient(#fce38c, #fbd055 50%, #fbdc6e);
}
.dialog hr {
    border: 0;
    height: 1px;
    margin: 1px 0;
    background: #dcdcdc;
}
.options {
    display: flex;
    flex-direction: column;
    flex: 1;
    min-height: 554px;
    padding: 2px 6px 0;
    border: 1px solid #8fa9bf;
    background: #fefefe;
}
.options h3 {
    padding-top: 4px;
    font-size: 18px;
    line-height: 27px;
}
.field {
    display: flex;
    align-items: center;
    height: 27px;
}
.wide { width: 173px; }
.mid { width: 152px; }
.short { width: 131px; }
.field input[type="text"] {
    width: 113px;
    height: 23px;
    padding: 0 4px;
    border: 1px solid #7f9db9;
    background: #fff;
}
.field input:disabled {
    color: #aca899;
    background: #ebe8d8;
}
.caption {
    margin-top: 2px;
    line-height: 16px;
}
.option {
    display: flex;
    align-items: center;
    gap: 8px;
    height: 22px;
}
.option input {
    appearance: none;
    width: 15px;
    height: 15px;
    margin: 0;
    border: 1px solid #3a6a92;
    background: linear-gradient(135deg, #dcdfe0, #fff);
}
.option input[type="radio"] {
    border-radius: 50%;
}
.option input[type="radio"]:checked {
    background: radial-gradient(#27a327 0 2px, #f4f8f4 4px);
}
.options hr {
    margin: 3px 0 2px;
    flex: none;
}
.select {
    position: relative;
    width: 101px;
}
.select select {
    appearance: none;
    display: block;
    width: 100%;
    height: 23px;
    padding: 0 3px;
    border: 1px solid #7f9db9;
    border-radius: 0;
    background: linear-gradient(#c6d6fb, #b3c8f8) right 1px center / 20px 19px no-repeat #fff;
}
.select::after {
    content: "";
    position: absolute;
    right: 8px;
    top: 6px;
    width: 6px;
    height: 6px;
    border: solid #40587c;
    border-width: 0 2px 2px 0;
    transform: rotate(45deg);
    pointer-events: none;
}
.dialog-foot {
    display: flex;
    justify-content: flex-end;
    padding: 4px 6px 8px;
    background: #ece9d8;
}
.close {
    width: 86px;
    height: 25px;
    border: 1px solid #1c4a80;
    border-radius: 3px;
    background: linear-gradient(#fff, #eceae2);
    box-shadow: inset 0 0 0 2px #a9c6f0;
}
.ring {
    position: absolute;
    left: 139px;
    top: 484px;
    width: 154px;
    height: 55px;
    border: 3px solid #385d8a;
    border-radius: 50%;
    pointer-events: none;
}

/* annotation */
.arrow {
    position: absolute;
    left: 182px;
    top: 709px;
    filter: drop-shadow(1px 2px 1px #999);
}
.callout {
    position: absolute;
    left: 125px;
    top: 750px;
    width: 207px;
    height: 100px;
    border: 2px solid #385d8a;
    background: #4f81bd;
    color: #fff;
    font: 24px/98px Lato, sans-serif;
    text-align: center;
}
```
